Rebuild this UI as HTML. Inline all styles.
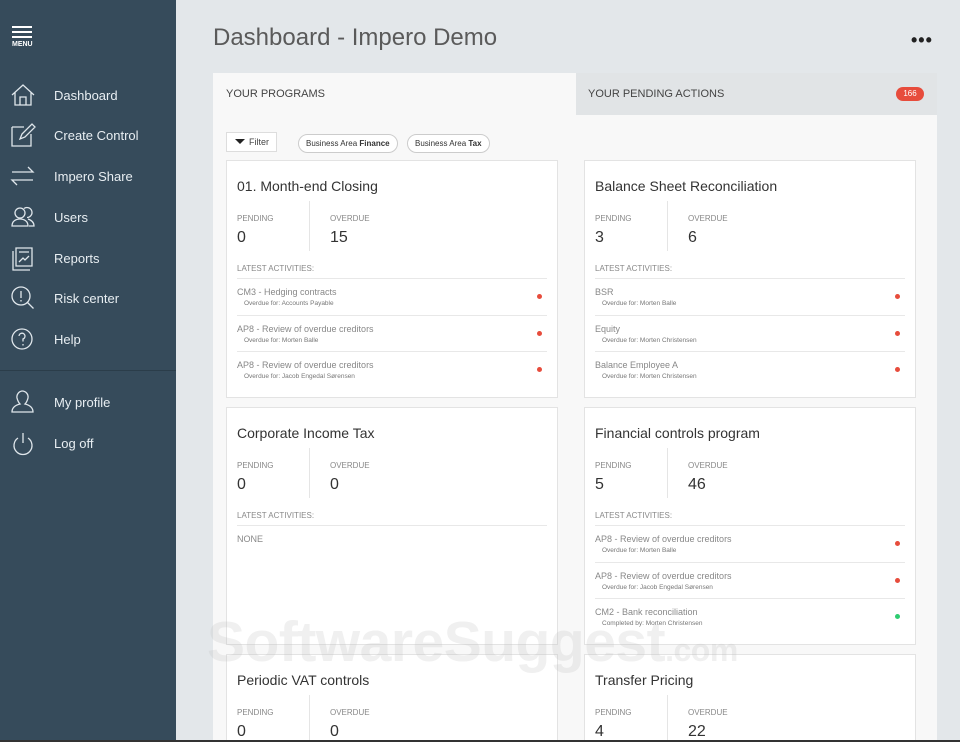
<!DOCTYPE html>
<html><head><meta charset="utf-8"><style>
*{box-sizing:border-box;margin:0;padding:0}
html,body{width:960px;height:742px;overflow:hidden}
body{background:#e3e7ea;font-family:"Liberation Sans",sans-serif;position:relative;color:#444}
.sb{position:absolute;left:0;top:0;width:176px;height:742px;background:#364b5b;color:#e8eef2}
.menu{position:absolute;left:12px;top:26px;width:20px}
.menu i{display:block;height:2px;background:#fff;margin-bottom:3px}
.menu span{font-size:7px;font-weight:bold;display:block;margin-top:2px;color:#fff}
.it{position:absolute;left:0;height:30px;width:176px;font-size:13px}
.it svg{position:absolute;left:10px;top:2px}
.it span{position:absolute;left:54px;top:8px}
.sep{position:absolute;left:0;top:370px;width:176px;height:1px;background:#2b3d4a}
h1{position:absolute;left:213px;top:24px;font-weight:normal;font-size:24px;color:#5a5a5a}
.dots{position:absolute;left:911px;top:30px;font-size:18px;letter-spacing:1px;color:#222;font-weight:bold}
.panel{position:absolute;left:213px;top:73px;width:724px;height:669px;background:#f8f8f8}
.tabr{position:absolute;left:576px;top:73px;width:361px;height:42px;background:#e1e4e6}
.tl{position:absolute;top:88px;font-size:11px;color:#444}
.badge{position:absolute;left:896px;top:87px;width:28px;height:14px;border-radius:7px;background:#e74c3c;color:#fff;font-size:8px;text-align:center;line-height:14px}
.filter{position:absolute;left:226px;top:132px;width:51px;height:20px;background:#fff;border:1px solid #ddd;font-size:9px;line-height:18px;padding-left:22px}
.filter:before{content:"";position:absolute;left:8px;top:6px;border-left:5px solid transparent;border-right:5px solid transparent;border-top:5px solid #222}
.pill{position:absolute;top:134px;height:19px;border:1px solid #ccc;border-radius:10px;background:#fff;font-size:8px;line-height:17px;padding:0 7px;color:#333}
.card{position:absolute;width:332px;background:#fff;border:1px solid #e3e3e3}
.card h2{position:absolute;left:10px;top:17px;font-size:14px;font-weight:normal;color:#333}
.lab{position:absolute;top:53px;font-size:8px;color:#888}
.val{position:absolute;top:68px;font-size:16px;color:#333}
.vd{position:absolute;left:82px;top:40px;width:1px;height:50px;background:#e5e5e5}
.la{position:absolute;left:10px;top:103px;font-size:8px;color:#888}
.row{position:absolute;left:10px;width:310px;height:36px;border-top:1px solid #e8e8e8}
.row b{position:absolute;left:0;top:8px;font-size:9px;font-weight:normal;color:#888}
.row small{position:absolute;left:7px;top:21px;font-size:6.5px;color:#777}
.row i{position:absolute;right:5px;top:15px;width:5px;height:5px;border-radius:50%;background:#e74c3c}
.wm{position:absolute;left:207px;top:609px;font-size:57px;font-weight:bold;color:rgba(185,185,185,.22);letter-spacing:-0.5px;white-space:nowrap}
.wm span{font-size:32px}
.bot{position:absolute;left:0;top:740px;width:960px;height:2px;background:#333}
</style></head><body>
<div class="sb">
<div class="menu"><i></i><i></i><i></i><span>MENU</span></div>
<div class="it" style="top:80px"><svg width="26" height="26" viewBox="0 0 26 26" fill="none" stroke="#dfe6eb" stroke-width="1.3"><path d="M2 13L13 3l11 10M5 10v13h16V10M10 23v-8h6v8"/></svg><span>Dashboard</span></div>
<div class="it" style="top:120px"><svg width="26" height="26" viewBox="0 0 26 26" fill="none" stroke="#dfe6eb" stroke-width="1.3"><path d="M2 5h12M2 5v19h19V12M10 17l2-5 10-10 3 3-10 10z"/></svg><span>Create Control</span></div>
<div class="it" style="top:161px"><svg width="26" height="26" viewBox="0 0 26 26" fill="none" stroke="#dfe6eb" stroke-width="1.3"><path d="M2 9h21l-5-5M23 17H2l5 5"/></svg><span>Impero Share</span></div>
<div class="it" style="top:202px"><svg width="26" height="26" viewBox="0 0 26 26" fill="none" stroke="#dfe6eb" stroke-width="1.3"><circle cx="10" cy="9" r="5"/><path d="M2 22c0-5 4-7 8-7s8 2 8 7zM14 4.5a5 5 0 1 1 3 9M18 15c3 1 6 3 6 7h-5"/></svg><span>Users</span></div>
<div class="it" style="top:243px"><svg width="26" height="26" viewBox="0 0 26 26" fill="none" stroke="#dfe6eb" stroke-width="1.3"><path d="M6 3h16v18H6zM3 6v19h17M9 7h10M9 17l4-4 2 2 4-4"/></svg><span>Reports</span></div>
<div class="it" style="top:283px"><svg width="26" height="26" viewBox="0 0 26 26" fill="none" stroke="#dfe6eb" stroke-width="1.3"><circle cx="11" cy="11" r="9"/><path d="M17.5 17.5l6 6M11 6v7M11 15v1.5"/></svg><span>Risk center</span></div>
<div class="it" style="top:324px"><svg width="26" height="26" viewBox="0 0 26 26" fill="none" stroke="#dfe6eb" stroke-width="1.3"><circle cx="12" cy="13" r="10"/><path d="M9 10a3 3 0 1 1 4 3v2.5M13 18v1.5"/></svg><span>Help</span></div>
<div class="sep"></div>
<div class="it" style="top:387px"><svg width="26" height="26" viewBox="0 0 26 26" fill="none" stroke="#dfe6eb" stroke-width="1.3"><path d="M12 2a6 6 0 0 1 6 7c-1 4-3 6-3 6 4 1 8 3 8 8H2c0-5 4-7 8-8 0 0-2-2-3-6a6 6 0 0 1 5-7z"/></svg><span>My profile</span></div>
<div class="it" style="top:428px"><svg width="26" height="26" viewBox="0 0 26 26" fill="none" stroke="#dfe6eb" stroke-width="1.3"><path d="M8 8a9 9 0 1 0 10 0M13 3v10"/></svg><span>Log off</span></div>
</div>
<h1>Dashboard - Impero Demo</h1>
<div class="dots">•••</div>
<div class="panel"></div>
<div class="tabr"></div>
<div class="tl" style="left:226px">YOUR PROGRAMS</div>
<div class="tl" style="left:588px">YOUR PENDING ACTIONS</div>
<div class="badge">166</div>
<div class="filter">Filter</div>
<div class="pill" style="left:298px">Business Area <b>Finance</b></div>
<div class="pill" style="left:407px">Business Area <b>Tax</b></div>

<div class="card" style="left:226px;top:160px;height:238px"><h2>01. Month-end Closing</h2>
<div class="lab" style="left:10px">PENDING</div><div class="val" style="left:10px">0</div><div class="vd"></div>
<div class="lab" style="left:103px">OVERDUE</div><div class="val" style="left:103px">15</div>
<div class="la">LATEST ACTIVITIES:</div>
<div class="row" style="top:117px"><b>CM3 - Hedging contracts</b><small>Overdue for: Accounts Payable</small><i></i></div>
<div class="row" style="top:154px"><b>AP8 - Review of overdue creditors</b><small>Overdue for: Morten Balle</small><i></i></div>
<div class="row" style="top:190px"><b>AP8 - Review of overdue creditors</b><small>Overdue for: Jacob Engedal Sørensen</small><i></i></div>
</div>
<div class="card" style="left:584px;top:160px;height:238px"><h2>Balance Sheet Reconciliation</h2>
<div class="lab" style="left:10px">PENDING</div><div class="val" style="left:10px">3</div><div class="vd"></div>
<div class="lab" style="left:103px">OVERDUE</div><div class="val" style="left:103px">6</div>
<div class="la">LATEST ACTIVITIES:</div>
<div class="row" style="top:117px"><b>BSR</b><small>Overdue for: Morten Balle</small><i></i></div>
<div class="row" style="top:154px"><b>Equity</b><small>Overdue for: Morten Christensen</small><i></i></div>
<div class="row" style="top:190px"><b>Balance Employee A</b><small>Overdue for: Morten Christensen</small><i></i></div>
</div>
<div class="card" style="left:226px;top:407px;height:238px"><h2>Corporate Income Tax</h2>
<div class="lab" style="left:10px">PENDING</div><div class="val" style="left:10px">0</div><div class="vd"></div>
<div class="lab" style="left:103px">OVERDUE</div><div class="val" style="left:103px">0</div>
<div class="la">LATEST ACTIVITIES:</div>
<div class="row" style="top:117px"><b>NONE</b></div>
</div>
<div class="card" style="left:584px;top:407px;height:238px"><h2>Financial controls program</h2>
<div class="lab" style="left:10px">PENDING</div><div class="val" style="left:10px">5</div><div class="vd"></div>
<div class="lab" style="left:103px">OVERDUE</div><div class="val" style="left:103px">46</div>
<div class="la">LATEST ACTIVITIES:</div>
<div class="row" style="top:117px"><b>AP8 - Review of overdue creditors</b><small>Overdue for: Morten Balle</small><i></i></div>
<div class="row" style="top:154px"><b>AP8 - Review of overdue creditors</b><small>Overdue for: Jacob Engedal Sørensen</small><i></i></div>
<div class="row" style="top:190px"><b>CM2 - Bank reconciliation</b><small>Completed by: Morten Christensen</small><i style="background:#2ecc71"></i></div>
</div>
<div class="card" style="left:226px;top:654px;height:100px"><h2>Periodic VAT controls</h2>
<div class="lab" style="left:10px">PENDING</div><div class="val" style="left:10px">0</div><div class="vd"></div>
<div class="lab" style="left:103px">OVERDUE</div><div class="val" style="left:103px">0</div>
</div>
<div class="card" style="left:584px;top:654px;height:100px"><h2>Transfer Pricing</h2>
<div class="lab" style="left:10px">PENDING</div><div class="val" style="left:10px">4</div><div class="vd"></div>
<div class="lab" style="left:103px">OVERDUE</div><div class="val" style="left:103px">22</div>
</div>
<div class="wm">SoftwareSuggest<span>.com</span></div>
<div class="bot"></div>
</body></html>
